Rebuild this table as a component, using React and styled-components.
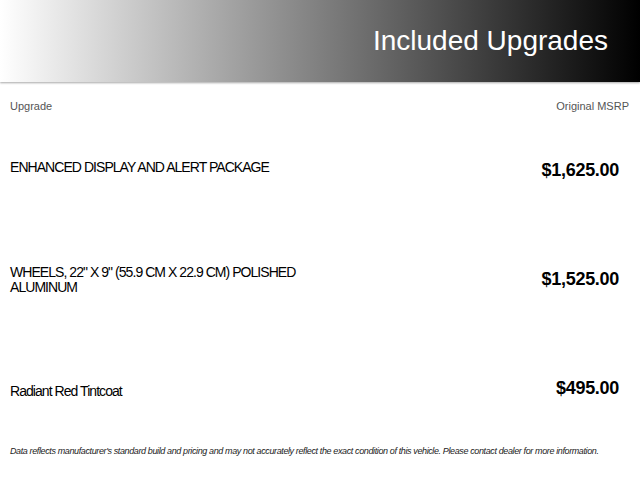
import React from "react";
import styled, { createGlobalStyle } from "styled-components";

const Global = createGlobalStyle`
  html, body {
    margin: 0;
    padding: 0;
    background: #fff;
    font-family: "Liberation Sans", Arial, sans-serif;
  }
`;

const Page = styled.div`
  width: 640px;
  height: 480px;
  overflow: hidden;
`;

const Banner = styled.header`
  height: 82px;
  background: linear-gradient(to right, #ffffff 0%, #000000 100%);
  box-shadow: 0 1px 2px rgba(0, 0, 0, 0.35);
  display: flex;
  align-items: center;
  justify-content: flex-end;
  padding-right: 32px;
`;

const Title = styled.h1`
  margin: 0;
  font-weight: normal;
  font-size: 28px;
  color: #fff;
`;

const Heads = styled.div`
  display: flex;
  justify-content: space-between;
  padding: 18px 11px 0 10px;
  font-size: 11px;
  color: #555;
`;

const List = styled.div`
  padding-top: 4px;
`;

const Row = styled.div`
  display: flex;
  justify-content: space-between;
  align-items: center;
  height: 109px;
  padding: 0 21px 0 10px;
`;

const Name = styled.div`
  font-size: 14px;
  line-height: 15px;
  letter-spacing: -0.95px;
  color: #000;
  width: 300px;
  margin-top: ${(p) => p.$shift || 0}px;
`;

const Price = styled.div`
  font-size: 18px;
  font-weight: bold;
  letter-spacing: -0.3px;
  color: #000;
`;

const Note = styled.p`
  margin: 3px 0 0;
  padding: 0 10px;
  font-size: 9px;
  font-style: italic;
  white-space: nowrap;
  letter-spacing: -0.38px;
  color: #222;
`;

const items = [
  { name: "ENHANCED DISPLAY AND ALERT PACKAGE", price: "$1,625.00", shift: -6 },
  { name: 'WHEELS, 22" X 9" (55.9 CM X 22.9 CM) POLISHED ALUMINUM', price: "$1,525.00", shift: 0 },
  { name: "Radiant Red Tintcoat", price: "$495.00", shift: 6 },
];

export default function App() {
  return (
    <Page>
      <Global />
      <Banner>
        <Title>Included Upgrades</Title>
      </Banner>
      <Heads>
        <span>Upgrade</span>
        <span>Original MSRP</span>
      </Heads>
      <List>
        {items.map((it) => (
          <Row key={it.name}>
            <Name $shift={it.shift}>{it.name}</Name>
            <Price>{it.price}</Price>
          </Row>
        ))}
      </List>
      <Note>
        Data reflects manufacturer's standard build and pricing and may not accurately reflect the exact condition of this vehicle. Please contact dealer for more information.
      </Note>
    </Page>
  );
}
